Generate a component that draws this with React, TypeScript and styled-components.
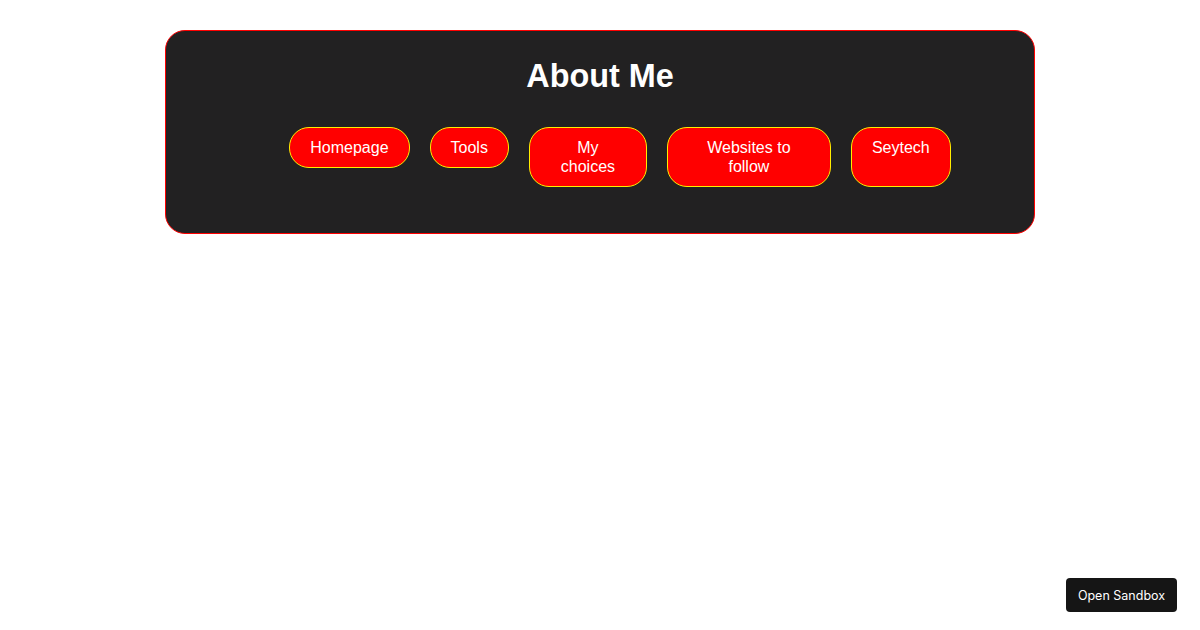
import React from 'react';
import styled, { createGlobalStyle } from 'styled-components';

const GlobalStyle = createGlobalStyle`
  html, body {
    margin: 0;
    padding: 0;
    background: #ffffff;
    font-family: 'Liberation Sans', Arial, sans-serif;
  }
`;

const links: { label: string; width?: number; tall?: boolean }[] = [
  { label: 'Homepage' },
  { label: 'Tools' },
  { label: 'My choices', width: 118 },
  { label: 'Websites to follow', width: 164 },
  { label: 'Seytech', tall: true },
];

const App = () => {
  return (
    <>
      <GlobalStyle />
      <Page>
        <Card>
          <Title>About Me</Title>
          <Nav>
            {links.map((link) => (
              <NavItem key={link.label}>
                <NavButton
                  href="#"
                  $width={link.width}
                  $tall={link.tall}
                >
                  {link.label}
                </NavButton>
              </NavItem>
            ))}
          </Nav>
        </Card>
      </Page>
      <SandboxButton type="button">Open Sandbox</SandboxButton>
    </>
  );
};

export default App;

const Page = styled.main`
  padding-top: 30px;
  min-height: 630px;
  box-sizing: border-box;
`;

const Card = styled.section`
  width: 870px;
  margin: 0 auto;
  box-sizing: border-box;
  background-color: #222122;
  border: 1px solid #ff0000;
  border-radius: 20px;
  padding: 27px 0 46px;
`;

const Title = styled.h1`
  margin: 0;
  text-align: center;
  color: #ffffff;
  font-size: 32.4px;
  line-height: 37px;
  font-weight: 700;
`;

const Nav = styled.ul`
  list-style: none;
  margin: 32px 0 0;
  padding: 0 0 0 40px;
  display: flex;
  justify-content: center;
  align-items: stretch;
  gap: 20px;
`;

const NavItem = styled.li`
  display: flex;
  align-items: flex-start;
`;

const NavButton = styled.a<{ $width?: number; $tall?: boolean }>`
  display: block;
  box-sizing: border-box;
  width: ${({ $width }) => ($width ? `${$width}px` : 'auto')};
  min-height: ${({ $tall }) => ($tall ? '60px' : '0')};
  padding: 10px 20px;
  background-color: #ff0000;
  border: 1px solid #ffee00;
  border-radius: 20px;
  color: #ffffff;
  text-decoration: none;
  text-align: center;
  font-size: 16px;
  line-height: 19px;
`;

const SandboxButton = styled.button`
  position: fixed;
  right: 23px;
  bottom: 18px;
  width: 111px;
  height: 34px;
  padding: 0;
  border: none;
  border-radius: 4px;
  background-color: #151515;
  color: #ffffff;
  font-family: Inter, 'Liberation Sans', sans-serif;
  font-size: 12.5px;
  cursor: pointer;
`;
